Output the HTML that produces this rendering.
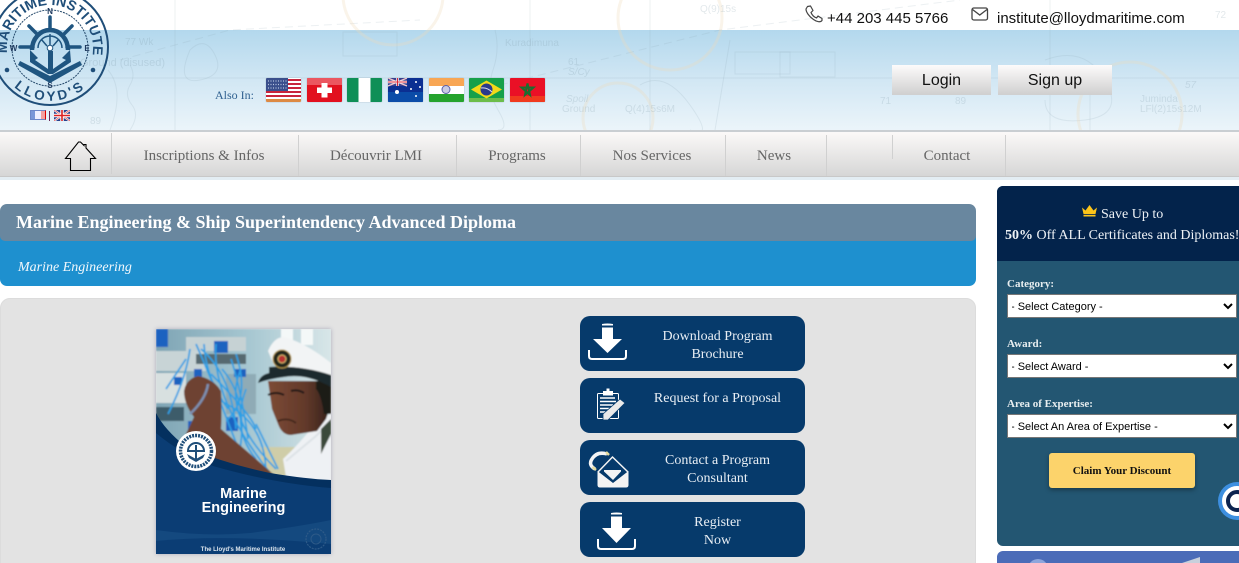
<!DOCTYPE html>
<html><head><meta charset="utf-8"><title>Lloyd's Maritime Institute</title>
<style>
html,body{margin:0;padding:0;width:1239px;height:563px;overflow:hidden;background:#fff;font-family:"Liberation Serif",serif}
.a{position:absolute}
#wrap{position:relative;width:1239px;height:563px;overflow:hidden}
.nav{position:absolute;top:149px;font-size:15px;line-height:15px;color:#666;white-space:nowrap;transform:translateX(-50%)}
.sep{position:absolute;top:135px;width:1px;height:41px;background:#d0d0d0}
.btn{position:absolute;left:580px;width:225px;height:55px;background:#063a6b;border-radius:10px;color:#e8eef4;font-size:14px;line-height:18px;text-align:center}
.btn span{position:absolute;left:54px;width:167px;top:11px}
.btn svg{position:absolute;left:0;top:0}
.lab{position:absolute;left:1007px;font-size:11px;line-height:12px;font-weight:bold;color:#e8eef0}
select{position:absolute;left:1007px;width:230px;height:24px;font:11px "Liberation Sans",sans-serif;background:#fff;color:#000;padding:1px 0 0 0;margin:0;text-indent:-1px}
.log{position:absolute;top:65px;height:30px;background:linear-gradient(#fdfbfb,#cfcfcf);font:16px/31px "Liberation Sans",sans-serif;color:#111;text-align:center}
.flag{position:absolute;top:78px;width:35px;height:24px;border-radius:1px;box-shadow:0 0 1px #8a9aa8}
</style></head><body><div id="wrap">

<svg class="a" style="left:0;top:0" width="1239" height="180" viewBox="0 0 1239 180">
<defs><linearGradient id="sky" x1="0" y1="0" x2="0" y2="1"><stop offset="0" stop-color="#b3d8ed"/><stop offset=".5" stop-color="#d2e7f4"/><stop offset="1" stop-color="#ecf5fa"/></linearGradient></defs>
<rect width="1239" height="30" fill="#fff"/>
<rect y="30" width="1239" height="102" fill="url(#sky)"/>
<g fill="none" stroke="#8aa0b0" stroke-opacity=".16" stroke-width="1">
<path d="M0 78H1239M175 0V130M530 0V130M650 0V130M1050 0V130"/>
<path d="M120 60L230 30L420 20M500 85L720 30L960 0" stroke-dasharray="8 5"/>
<path d="M108 70Q125 90 110 130M130 65q6 10 0 20t2 20t-2 25M495 30q5 20-2 40t5 40t0 20"/>
<rect x="343" y="32" width="54" height="24"/><rect x="735" y="52" width="55" height="22"/><rect x="780" y="52" width="55" height="25"/>
<path d="M1045 60q40-15 60 20t-20 40t-40-20M190 50q15-15 25 5t-15 25t-10-30M640 85q25-15 50 20t0 25"/>
<path d="M730 40L715 130M1090 80V130"/>
</g>
<g fill="none" stroke="#f0d9b8" stroke-opacity=".3" stroke-width="3">
<circle cx="393" cy="-5" r="50"/>
<circle cx="670" cy="18" r="52"/>
<circle cx="618" cy="118" r="35"/>
<circle cx="1130" cy="114" r="52"/>
</g>
<g fill="#7d94a6" fill-opacity=".22" font-family="Liberation Sans" font-size="10">
<text x="505" y="46">Kuradimuna</text><text x="80" y="66" font-size="11">Ground (disused)</text>
<text x="125" y="45">77 Wk</text><text x="625" y="112">Q(4)15s6M</text><text x="566" y="102" font-style="italic">Spoil</text>
<text x="562" y="112">Ground</text><text x="90" y="124">89</text><text x="1140" y="102">Juminda</text><text x="1140" y="112">LFl(2)15s12M</text>
<text x="1185" y="88" font-style="italic">57</text><text x="880" y="104">71</text><text x="955" y="104">89</text>
<text x="568" y="65">61</text><text x="568" y="75" font-style="italic">S/Cy</text><text x="700" y="12">Q(9)15s</text><text x="1215" y="18">72</text>
</g>
<rect y="130" width="1239" height="2" fill="#c9ced2"/>
<rect y="176" width="1239" height="4" fill="#e3edf3"/>
</svg>

<div class="a" style="left:0;top:132px;width:1239px;height:45px;background:linear-gradient(#fbf9f8,#d6d6d6);border-bottom:1px solid #c8c8c8;box-sizing:border-box"></div>
<div class="sep" style="left:111px;top:133px"></div><div class="sep" style="left:298px"></div><div class="sep" style="left:456px"></div><div class="sep" style="left:580px"></div><div class="sep" style="left:725px"></div><div class="sep" style="left:826px"></div><div class="sep" style="left:892px;height:24px"></div><div class="sep" style="left:1005px"></div>
<svg class="a" style="left:60px;top:139px" width="40" height="34" viewBox="0 0 40 34"><path d="M10.500 31.500V19.500H5.500L18.500 3H20.500L24 6.500V5.500H26V9L35.500 19.500H30.500V31.500Z" fill="none" stroke="#000" stroke-width="1.100"/></svg>
<div class="nav" style="left:204px">Inscriptions &amp; Infos</div>
<div class="nav" style="left:376px">Découvrir LMI</div>
<div class="nav" style="left:517px">Programs</div>
<div class="nav" style="left:652px">Nos Services</div>
<div class="nav" style="left:774px">News</div>
<div class="nav" style="left:947px">Contact</div>

<svg class="a" style="left:0;top:0" width="112" height="108" viewBox="0 0 112 108">
<defs><path id="ta" d="M7.300 53A43 43 0 1 1 92.700 53"/><path id="tb" d="M14 87A54 54 0 0 0 86 87"/></defs>
<circle cx="50" cy="47" r="58" fill="none" stroke="#1f4e79" stroke-width="2"/>
<circle cx="50" cy="48" r="38" fill="none" stroke="#25496b" stroke-width="1" stroke-dasharray="2 1"/>
<text font-family="Liberation Sans" font-size="14" font-weight="bold" fill="#1f4e79"><textPath href="#ta" textLength="147" lengthAdjust="spacing">MARITIME  INSTITUTE</textPath></text>
<text font-family="Liberation Sans" font-size="13.500" font-weight="bold" fill="#1f4e79"><textPath href="#tb" textLength="76" lengthAdjust="spacing">LLOYD'S</textPath></text>
<g font-family="Liberation Sans" font-size="8" font-weight="bold" fill="#1f3a5f" text-anchor="middle"><text x="50" y="14">N</text><text x="13.500" y="51">W</text><text x="87" y="51">E</text><text x="50" y="88">S</text></g>
<circle cx="7" cy="70" r="2.300" fill="#1f4e79"/><circle cx="93" cy="70" r="2.300" fill="#1f4e79"/>
<g fill="none" stroke="#1f5580">
<path d="M32 50A18 20 0 0 1 68 50" stroke-width="4.500"/>
<path d="M38 48A12 12 0 0 1 62 48M50 34V46M41 39L47 46M59 39L53 46" stroke-width="1.500"/>
<path d="M50 17V28M29 26L37 34M72 26L64 34M20 47H33M67 47H80" stroke-width="3.500" stroke-linecap="round"/>
</g>
<circle cx="50" cy="48" r="2.800" fill="#fff" stroke="#1f5580"/>
<path d="M48 51H53V69L66 60L62 58L70 50L71 62L53 74H48L30 62L30 50L38 58L35 60L48 69Z" fill="#1f5580"/>
<path d="M20 61L50 76L80 61L82 65L50 83L18 65Z" fill="#1f5580"/>
</svg>
<div class="a" style="left:30px;top:110px;width:16px;height:10px;box-sizing:border-box;background:linear-gradient(90deg,#7a96d8 0 30%,#eef 30% 70%,#f3a0a0 70%);border:1px solid #6c86c8;border-right-color:#d00"></div>
<div class="a" style="left:49px;top:111px;width:1px;height:10px;background:#6a2a5a"></div>
<svg class="a" style="left:54px;top:110px" width="16" height="11" viewBox="0 0 16 11"><rect width="16" height="11" fill="#27408b"/><path d="M0 0L16 11M16 0L0 11" stroke="#fff" stroke-width="2"/><path d="M0 0L16 11M16 0L0 11" stroke="#d44" stroke-width=".7"/><path d="M8 0V11M0 5.500H16" stroke="#fff" stroke-width="3.500"/><path d="M8 0V11M0 5.500H16" stroke="#d22" stroke-width="1.600"/></svg>

<div class="a" style="left:215px;top:88px;font-size:12px;line-height:14px;color:#2f6090">Also In:</div>

<svg class="flag" style="left:266px" viewBox="0 0 35 24"><rect width="35" height="24" fill="#fff"/><path d="M0 2H35M0 6H35M0 10H35M0 14H35M0 18H35" stroke="#c8243c" stroke-width="2"/><rect y="21" width="35" height="3" fill="#dd8a44"/><rect width="22" height="13" fill="#3a4f8c"/><path d="M2 3H21M2 6.500H21M2 10H21" stroke="#b8c4e0" stroke-width="1.200" stroke-dasharray="1 1.500"/></svg>
<svg class="flag" style="left:307px" viewBox="0 0 35 24"><rect width="35" height="24" fill="#e2101f"/><rect width="35" height="7" fill="#f1858c" opacity=".6"/><path d="M14.500 5H20.500V9.500H25V15H20.500V19.500H14.500V15H10V9.500H14.500Z" fill="#fff"/></svg>
<svg class="flag" style="left:347px" viewBox="0 0 35 24"><rect width="35" height="24" fill="#0f8f57"/><rect x="11.500" width="12" height="24" fill="#fff"/></svg>
<svg class="flag" style="left:388px" viewBox="0 0 35 24"><rect width="35" height="24" fill="#0b2f92"/><rect y="14" width="35" height="10" fill="#0b4ca8"/><rect width="19" height="8" fill="#39408e"/><path d="M0 0L19 8M19 0L0 8" stroke="#f4c8cc" stroke-width="1.300"/><path d="M9.500 0V8M0 4H19" stroke="#fff" stroke-width="2.400"/><path d="M9.500 0V8M0 4H19" stroke="#d8283a" stroke-width="1"/><g fill="#fff"><circle cx="9" cy="14" r="2"/><circle cx="28" cy="4" r="1"/><circle cx="23" cy="11" r="1"/><circle cx="32" cy="9" r="1"/><circle cx="28" cy="18" r="1"/></g></svg>
<svg class="flag" style="left:429px" viewBox="0 0 35 24"><rect width="35" height="8" fill="#f8a654"/><rect y="8" width="35" height="8" fill="#fff"/><rect y="16" width="35" height="8" fill="#25a32d"/><circle cx="17" cy="11.500" r="4" fill="#c9cbe4" stroke="#5b5fa8"/></svg>
<svg class="flag" style="left:469px" viewBox="0 0 35 24"><rect width="35" height="24" fill="#16a04a"/><rect y="20" width="35" height="4" fill="#6cbd4a"/><path d="M2 11.500L17.500 2.500L33 11.500L17.500 20.500Z" fill="#f2d91a"/><circle cx="17.500" cy="11.500" r="6" fill="#2b3a8c"/><path d="M12 10Q18 9 23 14" stroke="#dde" stroke-width="1" fill="none"/></svg>
<svg class="flag" style="left:510px" viewBox="0 0 35 24"><rect width="35" height="24" fill="#ea1026"/><rect y="18" width="35" height="6" fill="#f03a1e"/><path d="M17.500 5.500L20 17L11.500 9.500H23.500L15 17Z" fill="none" stroke="#1b6e30" stroke-width="2"/></svg>

<svg class="a" style="left:805px;top:5px" width="18" height="18" viewBox="0 0 18 18"><path d="M2.500 1.500L5.500 1L8 5.500L6 7.500C7 10 9 12 11.500 13L13 11L17 13.500V15.500C15.500 17.500 12 17 8.500 14.500C4 11.500 1 7 1 4Z" fill="none" stroke="#444" stroke-width="1.200" stroke-linejoin="round"/></svg>
<div class="a" style="left:827px;top:9px;font:15px/19px 'Liberation Sans',sans-serif;color:#111;white-space:nowrap">+44 203 445 5766</div>
<svg class="a" style="left:971px;top:6px" width="18" height="16" viewBox="0 0 18 16"><rect x="1" y="2" width="15.500" height="12" rx="1.800" fill="none" stroke="#444" stroke-width="1.300"/><path d="M1.500 3.500L8.750 9L16 3.500" fill="none" stroke="#444" stroke-width="1.300"/></svg>
<div class="a" style="left:997px;top:9px;font:15px/19px 'Liberation Sans',sans-serif;color:#111;white-space:nowrap">institute@lloydmaritime.com</div>
<div class="log" style="left:892px;width:99px">Login</div>
<div class="log" style="left:998px;width:114px">Sign up</div>

<div class="a" style="left:0;top:204px;width:976px;height:37px;background:#69879f;border-radius:7px 7px 5px 5px;z-index:2"></div>
<div class="a" style="left:0;top:236px;width:976px;height:50px;background:#1e90cf;border-radius:0 0 7px 7px"></div>
<div class="a" style="left:16px;top:212px;font-size:18px;line-height:21px;font-weight:bold;color:#fff;white-space:nowrap;z-index:3">Marine Engineering &amp; Ship Superintendency Advanced Diploma</div>
<div class="a" style="left:18px;top:259px;font-size:14px;line-height:17px;font-style:italic;color:#f2f8fc;white-space:nowrap">Marine Engineering</div>

<div class="a" style="left:0;top:298px;width:976px;height:280px;box-sizing:border-box;background:#e3e3e3;border:1px solid #dcdcdc;border-radius:10px"></div>

<div class="a" style="left:156px;top:329px;width:175px;height:225px;box-shadow:0 0 4px #aab"></div>
<svg class="a" style="left:156px;top:329px" width="175" height="225" viewBox="0 0 175 225">
<defs><linearGradient id="ph" x1="0" y1="0" x2="1" y2="0"><stop offset="0" stop-color="#7ea4b4"/><stop offset=".55" stop-color="#a8c8d2"/><stop offset="1" stop-color="#d8e6e8"/></linearGradient>
<linearGradient id="sk" x1="0" y1="0" x2="1" y2="0"><stop offset="0" stop-color="#7d4b35"/><stop offset=".6" stop-color="#62392a"/><stop offset="1" stop-color="#33201a"/></linearGradient>
<filter id="bl" x="-5%" y="-5%" width="110%" height="110%"><feGaussianBlur stdDeviation=".8"/></filter>
<clipPath id="cv"><rect width="175" height="225"/></clipPath></defs>
<g clip-path="url(#cv)">
<g filter="url(#bl)">
<rect width="175" height="225" fill="url(#ph)"/>
<rect x="0" y="22" width="50" height="20" fill="#c8d4d6"/><rect x="0" y="44" width="30" height="30" fill="#d8e0e0"/>
<rect x="30" y="8" width="60" height="14" fill="#c6d2d4"/><rect x="40" y="25" width="50" height="10" fill="#56696f"/>
<rect x="70" y="45" width="30" height="40" fill="#8fabb6"/><rect x="0" y="78" width="28" height="14" fill="#3e5c6a"/>
<rect x="125" y="0" width="12" height="12" fill="#f4f8f8"/><rect x="145" y="0" width="12" height="16" fill="#f4f8f8"/>
<path d="M0 0h12v18h-12zM58 12h14v12h-14zM18 48h8v8h-8zM38 40h8v8h-8zM78 40h12v8h-12zM70 88h12v14h-12zM32 92h8v14h-8z" fill="#1f62c0"/>
<rect x="105" y="118" width="38" height="30" fill="#cfcda8"/>
<path d="M12 85Q30 50 34 20M40 15Q60 60 88 135M60 15Q55 70 115 145M85 40Q65 85 120 140M45 20Q75 45 80 100M55 45Q95 85 100 100M60 70Q110 90 110 145M80 25Q95 70 70 92M10 60L30 30M90 60Q75 100 100 130M75 30Q85 60 92 110M48 15Q50 50 72 80M66 40Q92 70 84 120M100 95L122 140" stroke="#2f9fe4" stroke-width="1.700" fill="none"/>
<path d="M28 62Q30 50 42 47Q58 50 65 62Q66 85 65 100L100 130L125 152L60 140L30 105L38 88Q28 75 28 62Z" fill="#6e4331"/>
<path d="M34 85Q50 70 52 55" stroke="#7d8fb0" stroke-width="2.500" fill="none"/>
<path d="M127 130Q140 118 155 100L175 84V152L130 148Z" fill="#eef1f4"/>
<path d="M130 132L160 107L175 92" stroke="#dde2e6" stroke-width="2" fill="none"/>
<path d="M165 100L175 90V105L165 125Z" fill="#3a4a3a"/>
<path d="M112 52L175 52V75L170 90L161 102L135 106Q126 106 122 95L116 80Z" fill="url(#sk)"/>
<path d="M160 52H175V85L168 85Q165 65 160 60Z" fill="#1c1a18"/>
<path d="M112 66Q120 62 128 66M135 62Q142 60 148 64" stroke="#1c1412" stroke-width="2" fill="none"/>
<path d="M122 92Q132 88 140 94" stroke="#3a2018" stroke-width="1.500" fill="none"/>
<path d="M112 22Q118 8 128 8Q150 14 175 34V46L118 36Z" fill="#f2f4f5"/>
<path d="M113 38Q145 36 175 46V58Q150 44 128 48Q112 50 102 54Q104 46 113 44Z" fill="#1c2a2e"/>
<circle cx="126" cy="30" r="9" fill="#22261e" stroke="#b89848" stroke-width="1"/><circle cx="126" cy="30" r="4" fill="#b83030" stroke="#d8c070"/>
</g>
<path d="M0 84Q8 100 30 118Q70 135 114 144Q150 150 175 151V225H0Z" fill="#04305f"/>
<path d="M0 104Q25 125 57 137Q120 155 175 159V225H0Z" fill="#0b3d74"/>
<path d="M0 201Q50 208 94 204Q140 198 175 191V225H0Z" fill="#14497f"/>
<path d="M0 212Q70 205 175 215V225H0Z" fill="#0b3d74"/>
<circle cx="40" cy="122" r="20" fill="#fff"/><circle cx="40" cy="122" r="15.500" fill="none" stroke="#1f4e79" stroke-width="3.500" stroke-dasharray="2 1"/>
<path d="M32 122A8 8 0 0 1 48 122Z" fill="none" stroke="#1f4e79" stroke-width="2"/><path d="M31 125L40 130L49 125L47 129L40 133L33 129Z" fill="#1f4e79"/><rect x="39" y="116" width="2" height="14" fill="#1f4e79"/>
<text x="87.500" y="169" text-anchor="middle" font-family="Liberation Sans" font-size="14.500" font-weight="bold" fill="#fff">Marine</text>
<text x="87.500" y="183" text-anchor="middle" font-family="Liberation Sans" font-size="14.500" font-weight="bold" fill="#fff">Engineering</text>
<text x="87" y="222" text-anchor="middle" font-family="Liberation Sans" font-size="6" font-weight="bold" fill="#dde6ee">The Lloyd's Maritime Institute</text>
<circle cx="160" cy="210" r="10" fill="none" stroke="#2d5a88" stroke-width="1.200" stroke-dasharray="2 1"/><circle cx="160" cy="210" r="5" fill="none" stroke="#2d5a88"/>
</g></svg>

<div class="btn" style="top:316px"><svg width="60" height="55" viewBox="0 0 60 55"><path d="M22 8Q27.500 7 33 8V9.500H22ZM22 11.500H33V23H42L27.500 37L13 23H22Z" fill="#fff"/><path d="M9 34V40Q9 43 12 43H43Q46 43 46 40V34" fill="none" stroke="#fff" stroke-width="2"/></svg><span style="top:12px">Download Program<br>Brochure</span></div>
<div class="btn" style="top:378px"><svg width="60" height="55" viewBox="0 0 60 55"><rect x="17.500" y="15.500" width="21" height="25" rx="1" fill="none" stroke="#fff" stroke-width="1"/><rect x="23" y="13" width="10" height="4.500" fill="#fff"/><rect x="26.500" y="10.500" width="3" height="3" fill="#fff"/><path d="M20 20H35M20 23.500H36M20 27H33M20 30.500H30M20 34H27" stroke="#fff" stroke-width="1.500"/><path d="M23 36L40 21L45 25L28 42L23 42Z" fill="#eaeaea" stroke="#063a6b" stroke-width=".8"/></svg><span style="top:12px">Request for a Proposal</span></div>
<div class="btn" style="top:440px"><svg width="60" height="55" viewBox="0 0 60 55"><path d="M17.500 31L33 43L48.500 31V45Q48.500 47.500 46 47.500H20Q17.500 47.500 17.500 45Z" fill="#f4f4f4"/><path d="M18 32L32.500 17L48 32" fill="none" stroke="#f4f4f4" stroke-width="1.500"/><path d="M24 30H41V31.500L33 40L24 31.500Z" fill="#f4f4f4"/><path d="M24 29H41" stroke="#063a6b" stroke-width="1"/><path d="M15 29Q8 25 12 19Q17 11 27 14" fill="none" stroke="#f4f4f4" stroke-width="3.500"/><path d="M12.500 27L16 30M26 12L29 15" stroke="#e5dca0" stroke-width="2.500"/></svg><span style="top:12px">Contact a Program<br>Consultant</span></div>
<div class="btn" style="top:502px"><svg width="60" height="55" viewBox="0 0 60 55"><path d="M31 11Q36.500 10 42 11V12.500H31ZM31 14.500H42V26H51L36.500 41L22 26H31Z" fill="#fff"/><path d="M18 37V44Q18 47 21 47H52Q55 47 55 44V37" fill="none" stroke="#fff" stroke-width="2"/></svg><span style="top:12px">Register<br>Now</span></div>

<div class="a" style="left:997px;top:186px;width:260px;height:360px;background:#235672;border-radius:6px;overflow:hidden"><div style="height:75px;background:#03234b"></div></div>
<svg class="a" style="left:1081px;top:204px" width="17" height="13" viewBox="0 0 17 13"><path d="M1 3.500L4.500 6.500L8.500 1L12.500 6.500L16 3.500L14.500 10H2.500Z" fill="#fcc419"/><rect x="2.500" y="10.800" width="12" height="1.700" fill="#fcc419"/></svg>
<div class="a" style="left:1101px;top:206px;font-size:14px;line-height:17px;color:#eef2f6;white-space:nowrap">Save Up to</div>
<div class="a" style="left:1005px;top:227px;font-size:14px;line-height:17px;color:#eef2f6;white-space:nowrap"><b>50%</b> Off ALL Certificates and Diplomas!</div>
<div class="lab" style="top:278px">Category:</div>
<select style="top:294px"><option>- Select Category -</option></select>
<div class="lab" style="top:338px">Award:</div>
<select style="top:354px"><option>- Select Award -</option></select>
<div class="lab" style="top:398px">Area of Expertise:</div>
<select style="top:414px"><option>- Select An Area of Expertise -</option></select>
<div class="a" style="left:1049px;top:453px;width:146px;height:35px;background:#fcd36b;border-radius:3px;box-shadow:0 2px 5px rgba(0,0,0,.35);font-size:11px;font-weight:bold;line-height:36px;text-align:center;color:#111">Claim Your Discount</div>
<div class="a" style="left:1218px;top:482px;width:38px;height:38px;border-radius:50%;background:#3d8fe0"></div>
<div class="a" style="left:1222px;top:486px;width:30px;height:30px;border-radius:50%;background:#fff"></div>
<div class="a" style="left:1226px;top:490px;width:22px;height:22px;border-radius:50%;background:#fff;border:4px solid #0c2450;box-sizing:border-box"></div>
<div class="a" style="left:997px;top:551px;width:260px;height:20px;background:#4b6cb8;border-radius:6px 6px 0 0"></div>
<svg class="a" style="left:1020px;top:558px" width="40" height="5" viewBox="0 0 40 5"><circle cx="18" cy="11" r="10" fill="#8ea6dc"/></svg>
<svg class="a" style="left:1180px;top:557px" width="24" height="6" viewBox="0 0 24 6"><path d="M2 6L20 0V6Z" fill="#c8d0dc"/></svg>
</div></body></html>
